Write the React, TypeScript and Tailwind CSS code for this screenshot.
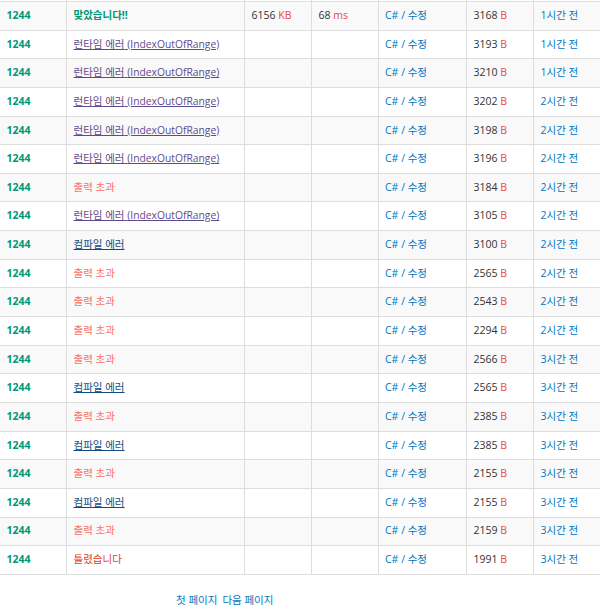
const F = "[font-family:'Open_Sans','Noto_Sans_CJK_KR',sans-serif]";

type R = { res: string; bytes: string; time: string; mem?: string; ms?: string };

const AC = "맞았습니다!!";
const RT = "런타임 에러";
const OE = "출력 초과";
const CE = "컴파일 에러";
const WA = "틀렸습니다";

const rows: R[] = [
  { res: AC, mem: "6156", ms: "68", bytes: "3168", time: "1시간 전" },
  { res: RT, bytes: "3193", time: "1시간 전" },
  { res: RT, bytes: "3210", time: "1시간 전" },
  { res: RT, bytes: "3202", time: "2시간 전" },
  { res: RT, bytes: "3198", time: "2시간 전" },
  { res: RT, bytes: "3196", time: "2시간 전" },
  { res: OE, bytes: "3184", time: "2시간 전" },
  { res: RT, bytes: "3105", time: "2시간 전" },
  { res: CE, bytes: "3100", time: "2시간 전" },
  { res: OE, bytes: "2565", time: "2시간 전" },
  { res: OE, bytes: "2543", time: "2시간 전" },
  { res: OE, bytes: "2294", time: "2시간 전" },
  { res: OE, bytes: "2566", time: "3시간 전" },
  { res: CE, bytes: "2565", time: "3시간 전" },
  { res: OE, bytes: "2385", time: "3시간 전" },
  { res: CE, bytes: "2385", time: "3시간 전" },
  { res: OE, bytes: "2155", time: "3시간 전" },
  { res: CE, bytes: "2155", time: "3시간 전" },
  { res: OE, bytes: "2159", time: "3시간 전" },
  { res: WA, bytes: "1991", time: "3시간 전" },
];

function Result({ res }: { res: string }) {
  if (res === AC) return <span className="font-bold text-[#009874]">{res}</span>;
  if (res === RT)
    return (
      <span className="text-[#5f4b8b] underline">
        {res} <span className="text-[10.3px]">(IndexOutOfRange)</span>
      </span>
    );
  if (res === CE) return <span className="text-[#0f4c81] underline">{res}</span>;
  if (res === OE) return <span className="text-[#fa7268]">{res}</span>;
  return <span className="text-[#dd4124]">{res}</span>;
}

const cell = "flex items-center pl-[6.5px] border-r border-[#ddd] h-full shrink-0";

export default function App() {
  return (
    <div className={`${F} w-[600px] h-[610px] bg-white overflow-hidden text-[10.5px] text-[#333]`}>
      <div className="h-[1px] flex">
        <div className="w-[67px] shrink-0 border-r border-[#ddd]" />
        <div className="w-[178px] shrink-0 border-r border-[#ddd]" />
        <div className="w-[67px] shrink-0 border-r border-[#ddd]" />
        <div className="w-[67px] shrink-0 border-r border-[#ddd]" />
        <div className="w-[88px] shrink-0 border-r border-[#ddd]" />
        <div className="w-[67px] shrink-0 border-r border-[#ddd]" />
      </div>
      {rows.map((r, i) => (
        <div
          key={i}
          className={`flex h-[28.65px] border-t border-[#ddd] ${i % 2 === 0 ? "bg-[#f9f9f9]" : "bg-white"}`}
        >
          <div className={`${cell} w-[67px]`}>
            <span className="font-bold text-[#009874]">1244</span>
          </div>
          <div className={`${cell} w-[178px]`}>
            <Result res={r.res} />
          </div>
          <div className={`${cell} w-[67px]`}>
            {r.mem && (
              <span>
                {r.mem} <span className="text-[#e74c3c]">KB</span>
              </span>
            )}
          </div>
          <div className={`${cell} w-[67px]`}>
            {r.ms && (
              <span>
                {r.ms} <span className="text-[#e74c3c]">ms</span>
              </span>
            )}
          </div>
          <div className="flex items-center pl-[6px] border-r border-[#ddd] h-full shrink-0 w-[88px]">
            <span className="text-[#0076c0]">C#</span>
            <span className="text-[#0076c0] whitespace-pre"> / 수정</span>
          </div>
          <div className={`${cell} w-[67px]`}>
            <span>
              {r.bytes} <span className="text-[#e74c3c]">B</span>
            </span>
          </div>
          <div className="flex items-center pl-[6.5px] h-full">
            <span className="text-[#0076c0]">{r.time}</span>
          </div>
        </div>
      ))}
      <div className="border-t border-[#ddd] pt-[17px] pl-[176px] flex gap-[5px] text-[#0076c0] leading-[16px]">
        <span>첫 페이지</span>
        <span>다음 페이지</span>
      </div>
    </div>
  );
}
